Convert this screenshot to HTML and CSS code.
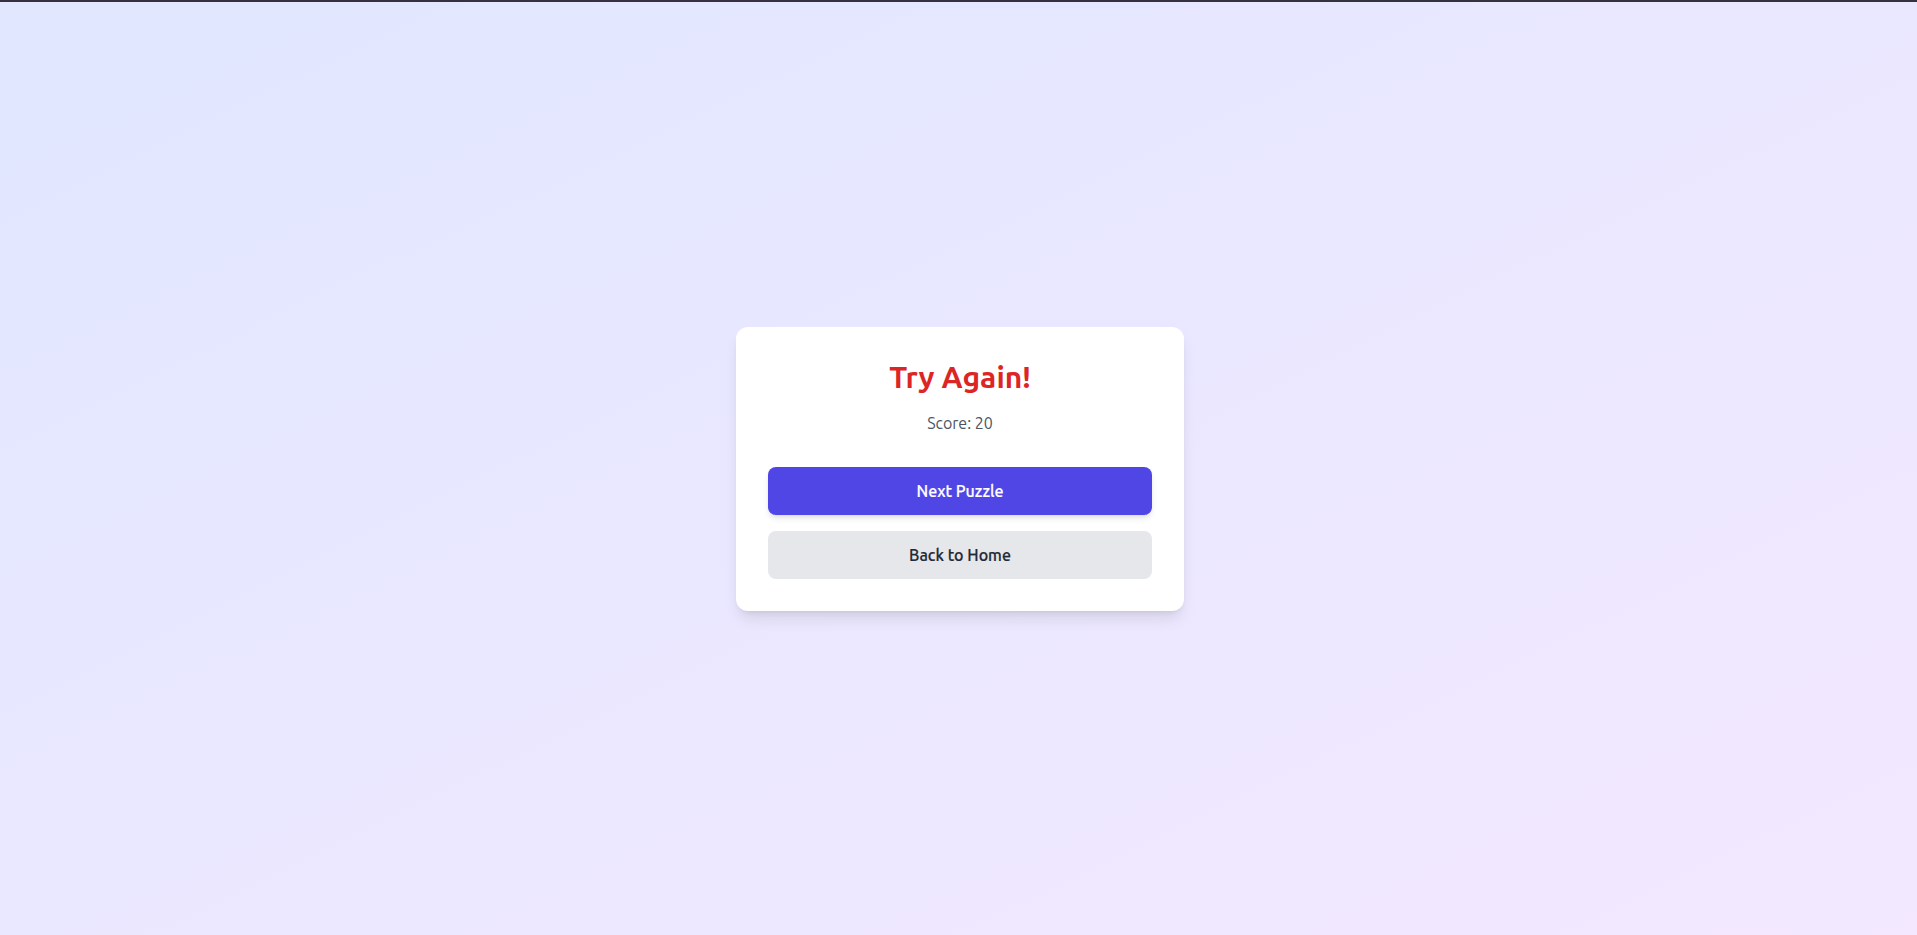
FILE: index.html
```html
<!DOCTYPE html>
<html lang="en">
<head>
<meta charset="utf-8">
<title>Try Again</title>
<link rel="stylesheet" href="styles.css">
</head>
<body>
<div class="topbar"></div>
<main class="page">
  <section class="card">
    <h1 class="title">Try Again!</h1>
    <p class="score">Score: 20</p>
    <div class="actions">
      <button class="btn btn-primary">Next Puzzle</button>
      <button class="btn btn-secondary">Back to Home</button>
    </div>
  </section>
</main>
</body>
</html>
```

FILE: styles.css
```css
* { box-sizing: border-box; }
html, body { margin: 0; padding: 0; height: 100%; }
body {
  font-family: "Ubuntu", "Noto Sans", "Open Sans", sans-serif;
  display: flex;
  flex-direction: column;
  background: linear-gradient(to bottom right, #e0e7ff, #f3e8ff);
}
.topbar {
  height: 2px;
  background: #36303f;
  flex: none;
}
.page {
  flex: 1;
  display: flex;
  align-items: center;
  justify-content: center;
  padding-left: 3px;
  padding-top: 1px;
}
.card {
  width: 448px;
  background: #fff;
  border-radius: 12px;
  padding: 32px;
  box-shadow: 0 10px 15px -3px rgba(0,0,0,0.1), 0 4px 6px -4px rgba(0,0,0,0.1);
  text-align: center;
}
.title {
  margin: 0 0 16px;
  font-size: 30px;
  line-height: 36px;
  font-weight: 700;
  color: #dc2626;
}
.score {
  margin: 0 0 32px;
  font-size: 16px;
  line-height: 24px;
  color: #4b5563;
}
.actions {
  display: flex;
  flex-direction: column;
  gap: 16px;
}
.btn {
  display: block;
  width: 100%;
  height: 48px;
  border: none;
  border-radius: 8px;
  font-family: "Ubuntu", "Noto Sans", sans-serif;
  font-size: 16px;
  line-height: 24px;
  font-weight: 500;
  -webkit-text-stroke: 0.2px currentColor;
  cursor: pointer;
}
.btn-primary {
  background: #4f46e5;
  color: #fff;
  box-shadow: 0 4px 6px -1px rgba(0,0,0,0.1), 0 2px 4px -2px rgba(0,0,0,0.1);
}
.btn-secondary {
  background: #e5e7eb;
  color: #1f2937;
}
```
